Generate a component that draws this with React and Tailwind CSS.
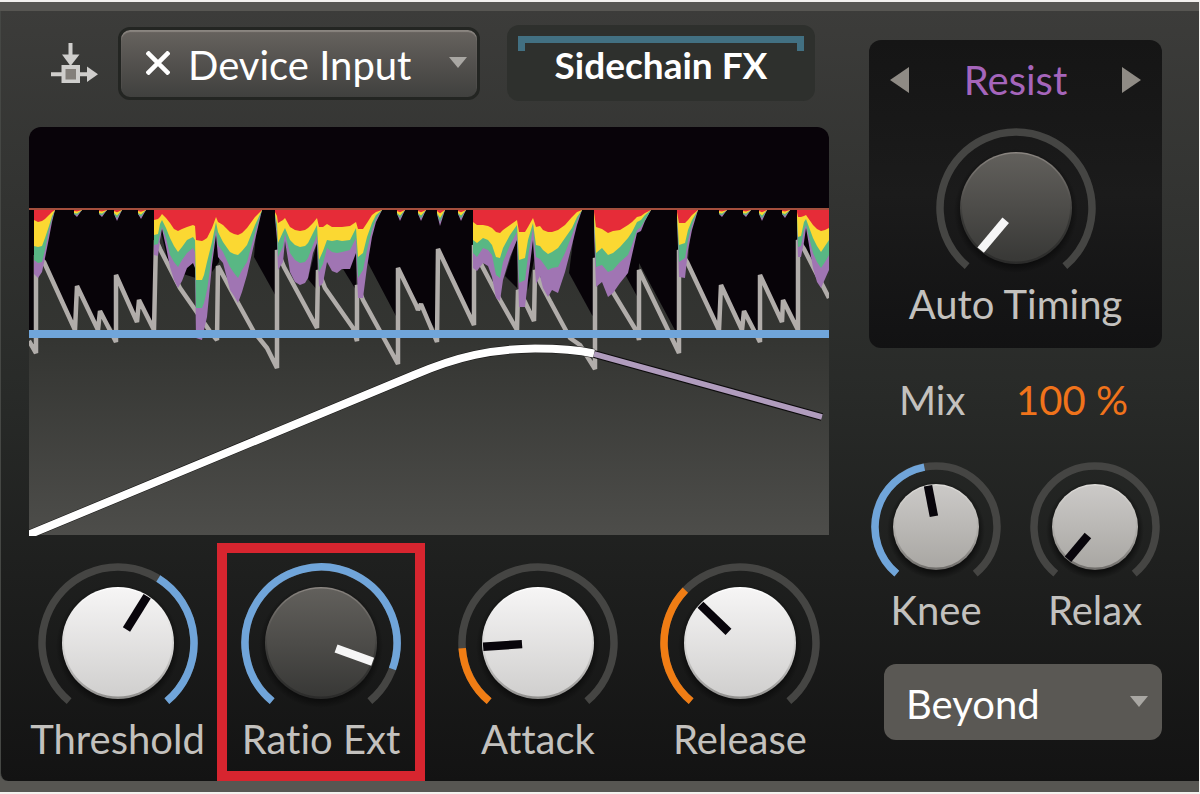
import React, { useId, useState } from "react";

/* Spectral gain-reduction columns: x, then the lower edge of the red, yellow, green and violet bands. */
const BANDS = [
  [[34, 220, 246, 260, 274], [38, 222, 247, 263, 278], [42, 221, 246, 262, 272], [45, 219, 238, 250, 258], [49, 215, 226, 230, 238], [52, 212, 216, 219, 222], [55, 210, 210, 210, 210]],
  [[154, 220, 235, 245, 255], [158, 219, 234, 244, 256], [160, 217, 224, 234, 240], [162, 214, 220, 227, 229], [166, 218, 228, 238, 247], [170, 223, 238, 255, 267], [174, 229, 246, 262, 280], [178, 231, 252, 267, 288], [182, 229, 247, 260, 281], [187, 227, 240, 253, 268], [193, 225, 237, 248, 263], [195, 226, 240, 252, 268], [196, 240, 280, 308, 338], [202, 241, 280, 308, 340], [204, 240, 275, 303, 330], [207, 238, 262, 290, 317], [212, 228, 242, 255, 265], [216, 217, 222, 230, 235], [218, 222, 232, 245, 257], [223, 225, 242, 252, 263], [230, 232, 252, 267, 290], [234, 234, 254, 273, 296], [238, 235, 255, 278, 303], [242, 233, 251, 270, 292], [247, 228, 245, 262, 275], [255, 217, 225, 233, 240], [262, 210, 210, 210, 210]],
  [[275, 212, 214, 216, 218], [277, 216, 224, 232, 240], [278, 223, 243, 257, 270], [283, 220, 232, 247, 262], [285, 218, 228, 234, 241], [290, 227, 240, 253, 272], [295, 230, 245, 260, 282], [300, 231, 247, 263, 285], [305, 230, 246, 262, 283], [308, 228, 243, 258, 278], [313, 223, 233, 245, 253], [317, 218, 225, 235, 243], [319, 227, 260, 272, 287], [323, 227, 251, 264, 283], [327, 224, 240, 248, 262], [332, 227, 241, 252, 271], [337, 227, 240, 253, 273], [342, 227, 241, 252, 269], [350, 226, 240, 250, 269], [356, 222, 228, 238, 253], [358, 229, 257, 278, 298], [363, 229, 253, 270, 298], [367, 223, 237, 250, 267], [372, 215, 223, 230, 237], [376, 212, 215, 219, 222], [382, 210, 210, 210, 210]],
  [[473, 222, 240, 253, 268], [477, 225, 243, 257, 271], [483, 225, 238, 248, 263], [488, 226, 240, 250, 266], [492, 228, 245, 255, 277], [496, 232, 257, 275, 298], [500, 233, 258, 278, 301], [503, 230, 248, 262, 280], [510, 225, 235, 245, 257], [517, 220, 225, 232, 240], [519, 232, 260, 283, 307], [525, 232, 258, 280, 307], [528, 227, 240, 257, 280], [533, 218, 223, 228, 240], [536, 227, 245, 257, 284], [540, 226, 246, 259, 276], [543, 230, 250, 263, 288], [548, 232, 254, 270, 297], [552, 232, 252, 268, 290], [558, 230, 248, 267, 293], [565, 225, 238, 253, 272], [572, 217, 228, 235, 245], [577, 212, 217, 221, 225], [582, 210, 210, 210, 210]],
  [[594, 212, 216, 222, 232], [596, 227, 253, 267, 287], [602, 229, 248, 265, 282], [608, 233, 255, 272, 297], [613, 231, 253, 270, 293], [620, 230, 247, 262, 283], [628, 225, 238, 255, 273], [632, 222, 232, 245, 255], [637, 217, 222, 230, 233], [641, 216, 220, 227, 231], [645, 213, 215, 220, 221], [651, 210, 210, 210, 210]],
  [[677, 212, 214, 216, 218], [679, 223, 245, 262, 277], [685, 223, 243, 258, 278], [688, 220, 230, 240, 250], [692, 215, 220, 225, 230], [698, 210, 210, 210, 210]],
  [[797, 212, 216, 222, 230], [798, 217, 237, 247, 257], [801, 217, 236, 246, 257], [804, 216, 222, 230, 242], [806, 215, 219, 225, 228], [813, 225, 238, 253, 268], [817, 229, 246, 262, 282], [821, 231, 252, 268, 288], [825, 230, 246, 262, 279], [829, 228, 240, 255, 270]],
  ...[[74, 217], [99, 217], [114, 221], [138, 219], [397, 221], [418, 221], [437, 226], [458, 221], [719, 217], [743, 217], [759, 221], [782, 218]].map(
    ([x, d]) => [
      [x, 211, 213, 214, 214],
      [x + 3, 210 + (d - 210) * 0.2, 210 + (d - 210) * 0.5, 210 + (d - 210) * 0.75, d],
      [x + 8, 210, 210, 210, 210],
    ]
  ),
];
const BAND_FILLS = ["#e62c38", "#fbd832", "#59b784", "#a075b3"];

function bandPath(points, i) {
  const first = points[0];
  const last = points[points.length - 1];
  return `M${first[0]} 210 ${points.map((p) => `L${p[0]} ${p[i + 1]}`).join(" ")} L${last[0]} 210Z`;
}

const DARK_AREAS = [
  "29,210 35,210 35,332 29,332",
  "46,210 155,210 155,328 139,300 137,322 116,275 115,332 100,311 98,328 77,286 75,328 44,262 45,240",
  "160,228 164,228 175,262 174,270 168,262",
  "183,274 188,265 195,262 196,278",
  "211,260 216,232 219,236 219,262 212,272",
  "258,210 277,210 278,300 254,257",
  "308,279 317,243 317,290",
  "343,269 356,250 356,290",
  "376,210 474,210 474,325 438,250 437,332 419,305 398,268 397,318 368,263 370,235",
  "505,276 517,238 517,288",
  "527,272 533,238 534,260 528,290",
  "577,210 595,210 595,318 592,315 569,273",
  "640,210 678,210 679,332 676,332 639,263 638,298 626,276 637,230",
  "692,210 798,210 798,328 783,300 782,322 761,275 760,332 757,332 744,311 742,328 721,285 720,328 688,262",
  "803,230 807,226 816,262 816,270 804,246",
];

const WAVE =
  "29,341 36,353 36,255 44,262 75,330 77,286 98,330 100,311 116,342 116,275 137,322 139,300 154,330 156,240 160,249 180,288 196,311 211,333 217,340 218,266 238,303 254,332 267,348 277,368 277,250 284,267 317,328 318,270 325,288 353,328 357,341 357,285 363,300 398,364 398,268 416,305 418,310 421,304 437,342 438,249 474,325 474,245 482,266 500,300 517,330 518,290 525,302 534,321 535,270 541,284 550,301 570,338 580,345 595,369 595,258 608,284 637,332 639,340 639,270 679,353 679,250 687,262 719,330 721,285 742,330 744,311 760,342 760,275 782,322 783,300 798,330 798,240 804,249 829,298";

function polar(c, r, deg) {
  const a = (deg * Math.PI) / 180;
  return [c + r * Math.sin(a), c - r * Math.cos(a)];
}

function arc(c, r, from, to) {
  const [x1, y1] = polar(c, r, from);
  const [x2, y2] = polar(c, r, to);
  return `M${x1} ${y1} A${r} ${r} 0 ${to - from > 180 ? 1 : 0} 1 ${x2} ${y2}`;
}

const FACES = {
  white: { stops: ["#f6f5f5", "#d0cfce"], rim: ["#ffffff", "#8f8e8c"], pointer: "#08050b" },
  silver: { stops: ["#cbc9c7", "#a9a7a3"], rim: ["#dddbd8", "#6e6c69"], pointer: "#08050b" },
  dark: { stops: ["#62605c", "#383836"], rim: ["#8b8681", "#2b2b2a"], pointer: "#f6f6f6" },
};

function Knob({ label, face, small, initial, fill, color }) {
  const id = useId();
  const [value, setValue] = useState(initial);
  const c = small ? 65 : 80;
  const r = small ? 43 : 56;
  const f = FACES[face];
  const [x1, y1] = polar(c, small ? 11 : 16, value);
  const [x2, y2] = polar(c, r - 1, value);
  const range = fill === "right" ? [value, 140] : [-140, value];
  return (
    <div className="flex flex-col items-center">
      <div className="relative">
        <svg
          className={small ? "block h-[122px] w-[130px]" : "block h-[150px] w-[160px]"}
          viewBox={small ? "0 0 130 122" : "0 0 160 150"}
          aria-hidden="true"
        >
          <defs>
            <linearGradient id={`${id}f`} x1="0" y1="0" x2="0" y2="1">
              <stop offset="0" stopColor={f.stops[0]} />
              <stop offset="1" stopColor={f.stops[1]} />
            </linearGradient>
            <linearGradient id={`${id}r`} x1="0" y1="0" x2="0" y2="1">
              <stop offset="0" stopColor={f.rim[0]} />
              <stop offset="0.6" stopColor={f.stops[1]} />
              <stop offset="1" stopColor={f.rim[1]} />
            </linearGradient>
            <radialGradient id={`${id}s`}>
              <stop offset="0.82" stopColor="#000" stopOpacity="0.6" />
              <stop offset="1" stopColor="#000" stopOpacity="0" />
            </radialGradient>
          </defs>
          <path d={arc(c, c - 4, -140, 140)} fill="none" stroke="#454543" strokeWidth="7.5" />
          {fill && <path d={arc(c, c - 4, range[0], range[1])} fill="none" stroke={color} strokeWidth="7.5" />}
          <circle cx={c} cy={c + 3} r={r + 6} fill={`url(#${id}s)`} />
          <circle cx={c} cy={c} r={r} fill={`url(#${id}r)`} />
          <circle cx={c} cy={c - 0.5} r={r - 2} fill={`url(#${id}f)`} />
          <line x1={x1} y1={y1} x2={x2} y2={y2} stroke={f.pointer} strokeWidth="8.5" />
        </svg>
        <input
          id={id}
          type="range"
          min="-140"
          max="140"
          value={value}
          onChange={(e) => setValue(Number(e.target.value))}
          className="absolute inset-0 h-full w-full cursor-pointer opacity-0"
        />
      </div>
      <label htmlFor={id} className="whitespace-nowrap">
        {label}
      </label>
    </div>
  );
}

function DownArrow() {
  return (
    <svg className="pointer-events-none h-3 w-[18px] shrink-0" viewBox="0 0 18 12" aria-hidden="true">
      <path d="M0 0H18L9 11Z" fill="#a9a7a3" />
    </svg>
  );
}

function RoutingIcon() {
  return (
    <svg className="h-10 w-12 shrink-0" viewBox="0 0 48 40" aria-hidden="true">
      <path d="M19.500 0V14" stroke="#cfcecc" strokeWidth="4" />
      <path d="M11 11.500H28.500L19.500 23Z" fill="#cfcecc" />
      <path d="M0 31.300H12M27 31.300H38" stroke="#cfcecc" strokeWidth="4" />
      <path d="M36 23.500L47 31.300L36 39Z" fill="#cfcecc" />
      <rect x="12.500" y="24" width="14.500" height="14.500" fill="#84807b" stroke="#cfcecc" strokeWidth="4" />
    </svg>
  );
}

function Display() {
  return (
    <svg className="block w-full rounded-t-xl" viewBox="29 127 800 409" role="img" aria-label="Transfer curve and gain reduction">
      <defs>
        <linearGradient id="floor" x1="0" y1="0" x2="0" y2="1">
          <stop offset="0" stopColor="#2f312e" />
          <stop offset="0.4" stopColor="#343532" />
          <stop offset="1" stopColor="#4d4d4a" />
        </linearGradient>
      </defs>
      <rect x="29" y="127" width="800" height="83" fill="#080309" />
      <rect x="29" y="210" width="800" height="325" fill="url(#floor)" />
      {DARK_AREAS.map((points) => (
        <polygon key={points} points={points} fill="#070308" />
      ))}
      <polyline points={WAVE} fill="none" stroke="#b1adaa" strokeWidth="4.5" strokeLinejoin="bevel" />
      {[3, 2, 1, 0].map((i) => (
        <path key={i} d={BANDS.map((b) => bandPath(b, i)).join("")} fill={BAND_FILLS[i]} />
      ))}
      <path d="M29 209H829" stroke="#d9694f" strokeWidth="1.500" />
      <path d="M29 334H829" stroke="#70a5da" strokeWidth="8" />
      <path d="M594 354L822 417" fill="none" stroke="#0c0b0c" strokeWidth="8" />
      <path d="M594 354L822 417" fill="none" stroke="#b09cbd" strokeWidth="5.500" />
      <path d="M28 535L414 375C458 356 492 349 535 348.500C560 348.500 578 350 594 353.500" fill="none" stroke="#141312" strokeWidth="9" />
      <path d="M28 535L414 375C458 356 492 349 535 348.500C560 348.500 578 350 594 353.500" fill="none" stroke="#fff" strokeWidth="8" />
    </svg>
  );
}

function Arrow({ left }) {
  return (
    <svg className="h-[26px] w-[19px]" viewBox="0 0 19 26" aria-hidden="true">
      <path d={left ? "M19 0V26L0 13Z" : "M0 0V26L19 13Z"} fill="#8f8b85" />
    </svg>
  );
}

export default function App() {
  return (
    <div className="bg-[#f3f1ee] py-[2px] pr-px font-['Lato',sans-serif] text-[40px] leading-[52px] text-[#c3c1be] [font-variant-ligatures:none]">
      <div className="bg-[#575652] pt-[9px] pb-[11px]">
        <main className="grid grid-cols-[800fr_293fr] gap-10 rounded-bl-lg border-l border-[#454744] bg-linear-to-b from-[#3c3c3a] via-[#282a28] via-50% to-[#131313] pr-[37px] pl-7">
          <section className="flex flex-col">
            <div className="flex items-center pt-[14px] pr-[14px] pb-[26px] pl-[22px]">
              <RoutingIcon />
              <div className="ml-[19px] grid flex-1 grid-cols-[362fr_308fr] items-center gap-[27px]">
                <div className="flex h-[73px] items-center rounded-xl border-3 border-[#232522] bg-linear-to-b from-[#67635f] to-[#40403e] pr-[10px] pl-[25px] text-white shadow-[inset_0_2px_1px_#8a8580]">
                  <button type="button" aria-label="Clear input" className="shrink-0">
                    <svg className="block h-6 w-6" viewBox="0 0 24 24">
                      <path d="M1 1L23 23M23 1L1 23" stroke="#fff" strokeWidth="4.500" />
                    </svg>
                  </button>
                  <select aria-label="Sidechain source" className="ml-[18px] min-w-0 flex-1 appearance-none bg-transparent pt-1">
                    <option>Device Input</option>
                  </select>
                  <DownArrow />
                </div>
                <button
                  type="button"
                  className="relative flex h-[76px] items-center justify-center rounded-xl bg-[#2e302d] text-[37px] font-bold text-white"
                >
                  <span className="absolute inset-x-[11px] top-[11px] h-[15px] border-7 border-b-0 border-[#427082]" />
                  <span className="pt-1 whitespace-nowrap">Sidechain FX</span>
                </button>
              </div>
            </div>
            <Display />
            <div className="flex justify-between pt-[7px]">
              <div className="flex gap-[11px]">
                <div className="w-[177px] pt-5">
                  <Knob label="Threshold" face="white" initial={32} fill="right" color="#70a5da" />
                </div>
                <div className="w-[208px] border-10 border-[#d7252f] pt-[10px] pb-[6px]">
                  <Knob label="Ratio Ext" face="dark" initial={110} fill="left" color="#70a5da" />
                </div>
              </div>
              <div className="flex gap-6 pt-5">
                <div className="w-[178px]">
                  <Knob label="Attack" face="white" initial={-94} fill="left" color="#f07d14" />
                </div>
                <div className="w-[178px]">
                  <Knob label="Release" face="white" initial={-46} fill="left" color="#f07d14" />
                </div>
              </div>
            </div>
          </section>

          <section className="flex flex-col pt-[29px]">
            <div className="rounded-xl bg-linear-to-b from-[#151515] via-[#1b1b1b] to-[#121213] pt-[14px] pb-[18px]">
              <div className="flex items-center justify-between px-[21px] text-[#a565bb]">
                <button type="button" aria-label="Previous mode">
                  <Arrow left />
                </button>
                <span>Resist</span>
                <button type="button" aria-label="Next mode">
                  <Arrow />
                </button>
              </div>
              <div className="pt-[22px]">
                <Knob label="Auto Timing" face="dark" initial={-140} />
              </div>
            </div>
            <div className="flex justify-between pt-[26px] pr-[34px] pl-[30px]">
              <span>Mix</span>
              <span className="text-[#f0731b]">100 %</span>
            </div>
            <div className="flex justify-between px-[2px] pt-9">
              <Knob label="Knee" face="silver" small initial={-11} fill="left" color="#70a5da" />
              <Knob label="Relax" face="silver" small initial={-140} />
            </div>
            <div className="mt-7 ml-[15px] flex h-[76px] items-center rounded-xl bg-[#5a5854] pr-[14px] pl-[22px] text-white">
              <select aria-label="Range mode" className="min-w-0 flex-1 appearance-none bg-transparent pt-1">
                <option>Beyond</option>
              </select>
              <DownArrow />
            </div>
          </section>
        </main>
      </div>
    </div>
  );
}
